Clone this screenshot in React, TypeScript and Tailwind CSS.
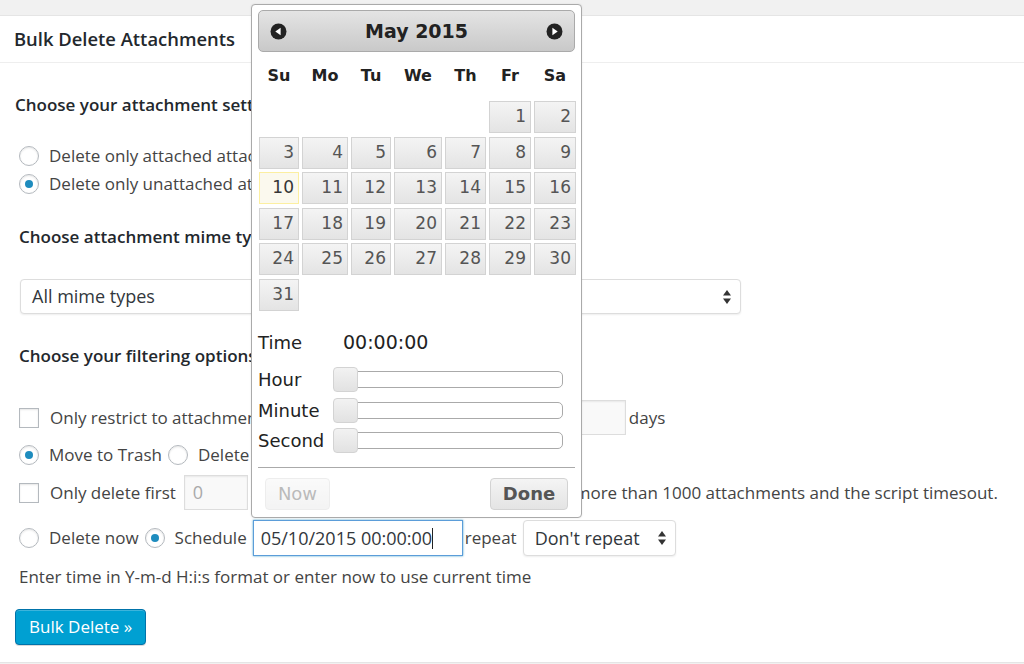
import React from "react";

const days = [
  [null, null, null, null, null, 1, 2],
  [3, 4, 5, 6, 7, 8, 9],
  [10, 11, 12, 13, 14, 15, 16],
  [17, 18, 19, 20, 21, 22, 23],
  [24, 25, 26, 27, 28, 29, 30],
  [31, null, null, null, null, null, null],
];

function Radio({ checked }: { checked?: boolean }) {
  return (
    <span className="flex-none w-5 h-5 rounded-full border border-[#b4b9be] bg-white shadow-[inset_0_1px_2px_rgba(0,0,0,0.1)] flex items-center justify-center">
      {checked && <span className="w-2 h-2 rounded-full bg-[#1e8cbe]" />}
    </span>
  );
}

function Checkbox() {
  return <span className="flex-none w-5 h-5 border border-[#b4b9be] bg-white shadow-[inset_0_1px_2px_rgba(0,0,0,0.1)]" />;
}

function Arrows() {
  return (
    <svg width="10" height="16" viewBox="0 0 10 16" className="flex-none">
      <path d="M5 1 L9 6.5 L1 6.5 Z" fill="#333" />
      <path d="M5 15 L9 9.5 L1 9.5 Z" fill="#333" />
    </svg>
  );
}

function CircleArrow({ dir }: { dir: "l" | "r" }) {
  return (
    <svg width="17" height="17" viewBox="0 0 16 16">
      <circle cx="8" cy="8" r="7.5" fill="#222" />
      {dir === "l" ? <path d="M5 8 L10 4.5 L10 11.5 Z" fill="#fff" /> : <path d="M11 8 L6 4.5 L6 11.5 Z" fill="#fff" />}
    </svg>
  );
}

function Slider() {
  return (
    <div className="relative flex-1 h-[17px] rounded-[5px] border border-[#aaa] bg-white">
      <span className="absolute left-[-1px] top-[-5px] w-[25px] h-[25px] rounded-[4px] border border-[#d3d3d3] bg-linear-to-b from-[#f2f2f2] to-[#e2e2e2]" />
    </div>
  );
}

function DatePicker() {
  const cols = "grid grid-cols-[40px_46px_40px_48px_41px_42px_42px] gap-x-[3px]";
  return (
    <div className="absolute left-[251px] top-[4px] w-[331px] h-[514px] rounded-[4px] border border-[#aaa] bg-white px-[6px] pt-[5px] text-[#222] shadow-[0_0_2px_rgba(0,0,0,0.1)]" style={{ fontFamily: '"DejaVu Sans", Verdana, sans-serif' }}>
      <div className="h-[42px] rounded-[5px] border border-[#aaa] bg-linear-to-b from-[#e4e4e4] to-[#c9c9c9] flex items-center justify-between px-[11px]">
        <CircleArrow dir="l" />
        <span className="text-[19px] font-bold text-[#222]">May 2015</span>
        <CircleArrow dir="r" />
      </div>
      <div className={`${cols} mt-[12px] h-[24px] items-center ml-[1px]`}>
        {["Su", "Mo", "Tu", "We", "Th", "Fr", "Sa"].map((d) => (
          <span key={d} className="text-center text-[16px] font-bold">{d}</span>
        ))}
      </div>
      <div className={`${cols} gap-y-[3.5px] mt-[13px] ml-[1px]`}>
        {days.flat().map((d, i) =>
          d === null ? (
            <span key={i} className="h-[32px]" />
          ) : (
            <span
              key={i}
              className={`h-[32px] flex items-center justify-end pr-[4px] text-[17px] border ${
                d === 10
                  ? "border-[#fcefa1] bg-[#fbf9ee] text-[#363636]"
                  : "border-[#d3d3d3] bg-linear-to-b from-[#f4f4f4] to-[#e4e4e4] text-[#555]"
              }`}
            >
              {d}
            </span>
          )
        )}
      </div>
      <div className="mt-[20px] h-[24px] flex items-center text-[18px]">
        <span className="w-[85px]">Time</span>
        <span className="text-[19px]">00:00:00</span>
      </div>
      <div className="mt-[12px] flex flex-col gap-[4.5px] text-[18px]">
        {["Hour", "Minute", "Second"].map((l) => (
          <div key={l} className="h-[26px] flex items-center pr-[12px]">
            <span className="w-[75px]">{l}</span>
            <Slider />
          </div>
        ))}
      </div>
      <div className="mt-[13px] border-t border-[#aaa]" />
      <div className="mt-[10px] flex justify-between px-[7px]">
        <span className="h-[32px] w-[65px] rounded-[4px] border border-[#d3d3d3] bg-linear-to-b from-[#f4f4f4] to-[#e4e4e4] text-[#555] opacity-40 flex items-center justify-center text-[18px]">Now</span>
        <span className="h-[32px] w-[78px] rounded-[4px] border border-[#d3d3d3] bg-linear-to-b from-[#f4f4f4] to-[#e4e4e4] text-[#555] font-bold flex items-center justify-center text-[18px]">Done</span>
      </div>
    </div>
  );
}

export default function App() {
  return (
    <div className="relative w-[1024px] h-[664px] overflow-hidden bg-[#f1f1f1] pt-[15px] text-[17px] text-[#444]" style={{ fontFamily: '"Open Sans", "Noto Sans", sans-serif' }}>
      <div className="bg-white border-y border-[#e5e5e5] pb-[17px]">
        <div className="h-[47px] flex items-center px-[14px] border-b border-[#eee] text-[18.4px] font-semibold text-[#23282d]">Bulk Delete Attachments</div>

        <div className="px-[15px]">
          <h4 className="mt-[30px] h-[24px] flex items-center font-semibold text-[#23282d]">Choose your attachment settings</h4>
          <div className="mt-[25px] pl-[4px]">
            <label className="h-[28px] flex items-center gap-[10px]"><Radio /> Delete only attached attachments</label>
            <label className="h-[28px] flex items-center gap-[10px]"><Radio checked /> Delete only unattached attachments</label>
          </div>

          <div className="pl-[4px]">
            <h4 className="mt-[27px] h-[24px] flex items-center font-semibold text-[#23282d]">Choose attachment mime types</h4>
            <div className="mt-[30px] w-[721px] h-[35px] ml-[1px] rounded-[4px] border border-[#ddd] bg-white shadow-[0_1px_2px_rgba(0,0,0,0.07)] flex items-center justify-between pl-[11px] pr-[8px] text-[#32373c] text-[18px]">
              <span>All mime types</span>
              <Arrows />
            </div>

            <h4 className="mt-[30px] h-[24px] flex items-center font-semibold text-[#23282d]">Choose your filtering options</h4>

            <div className="mt-[32px] h-[35px] flex items-center">
              <Checkbox />
              <span className="ml-[11px]">Only restrict to attachments which are</span>
              <span className="ml-[5px] w-[203px] h-[35px] rounded-[4px] border border-[#ddd]" />
              <span className="ml-[5px] w-[60px] h-[35px] border border-[#ddd] bg-[#f9f9f9] shadow-[inset_0_1px_2px_rgba(0,0,0,0.07)]" />
              <span className="ml-[3px]">days</span>
            </div>

            <div className="mt-[6px] h-[28px] flex items-center">
              <Radio checked />
              <span className="ml-[10px]">Move to Trash</span>
              <span className="ml-[6px]"><Radio /></span>
              <span className="ml-[10px]">Delete permanently</span>
            </div>

            <div className="mt-[6px] h-[35px] flex items-center">
              <Checkbox />
              <span className="ml-[11px]">Only delete first</span>
              <span className="ml-[8px] w-[64px] h-[35px] border border-[#ddd] bg-[#f9f9f9] shadow-[inset_0_1px_2px_rgba(0,0,0,0.07)] flex items-center pl-[8px] text-[#aaa] text-[18px]">0</span>
              <span className="ml-[3px] whitespace-nowrap">attachments. Use this option if there are more than 1000 attachments and the script timesout.</span>
            </div>

            <div className="mt-[10px] h-[36px] flex items-center">
              <Radio />
              <span className="ml-[10px]">Delete now</span>
              <span className="ml-[6px]"><Radio checked /></span>
              <span className="ml-[10px]">Schedule</span>
              <span className="ml-[6px] w-[210px] h-[36px] border border-[#5b9dd9] shadow-[0_0_2px_rgba(30,140,190,0.8)] flex items-center pl-[7px] text-[#32373c] text-[18px]">
                05/10/2015 00:00:00<span className="w-px h-[21px] bg-[#222]" />
              </span>
              <span className="ml-[2px]">repeat</span>
              <span className="ml-[6px] w-[153px] h-[36px] rounded-[4px] border border-[#ddd] bg-white shadow-[0_1px_2px_rgba(0,0,0,0.07)] flex items-center justify-between pl-[11px] pr-[8px] text-[#32373c] text-[18px]">
                <span>Don't repeat</span>
                <Arrows />
              </span>
            </div>

            <p className="mt-[9px] h-[24px] flex items-center">Enter time in Y-m-d H:i:s format or enter now to use current time</p>
          </div>

          <button className="mt-[20px] h-[36px] px-[13px] rounded-[4px] border border-[#0073aa] bg-[#00a0d2] text-white text-[17px] shadow-[inset_0_1px_0_rgba(120,200,230,0.5),0_1px_0_rgba(0,0,0,0.15)]">Bulk Delete »</button>
        </div>
      </div>
      <DatePicker />
    </div>
  );
}
